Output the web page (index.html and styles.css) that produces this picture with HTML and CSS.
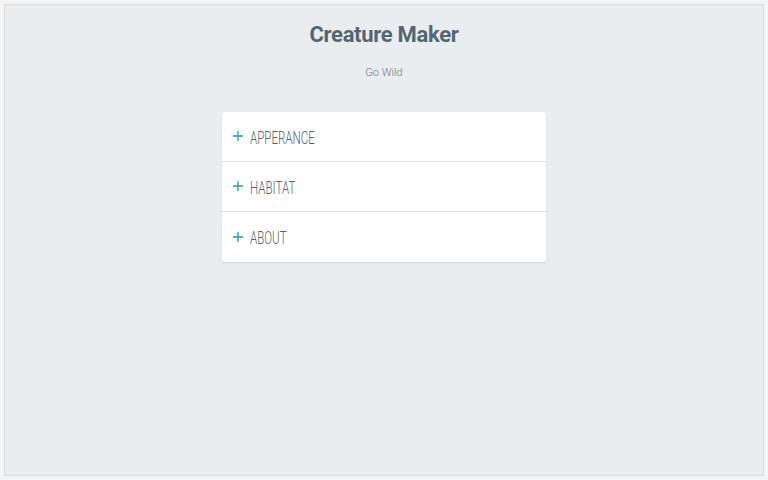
FILE: index.html
```html
<!DOCTYPE html>
<html>
<head>
<meta charset="utf-8">
<link rel="stylesheet" href="styles.css">
</head>
<body>
<div class="frame">
  <h1 class="title">Creature Maker</h1>
  <p class="subtitle">Go Wild</p>
  <div class="accordion">
    <div class="row"><svg class="plus" width="10" height="10" viewBox="0 0 10 10"><path d="M5 0V10M0 5H10" stroke="#1a9fad" stroke-width="1.3"/></svg><span class="label">APPERANCE</span></div>
    <div class="row"><svg class="plus" width="10" height="10" viewBox="0 0 10 10"><path d="M5 0V10M0 5H10" stroke="#1a9fad" stroke-width="1.3"/></svg><span class="label">HABITAT</span></div>
    <div class="row"><svg class="plus" width="10" height="10" viewBox="0 0 10 10"><path d="M5 0V10M0 5H10" stroke="#1a9fad" stroke-width="1.3"/></svg><span class="label">ABOUT</span></div>
  </div>
</div>
</body>
</html>
```
FILE: styles.css
```css
html, body { margin: 0; padding: 0; }
body {
  background: #f4f4f4;
  padding: 4px;
  height: 480px;
  box-sizing: border-box;
  font-family: Roboto, "Liberation Sans", sans-serif;
}
.frame {
  height: 472px;
  box-sizing: border-box;
  border: 1px solid #dcdcdc;
  background: #e9edf0;
  display: flex;
  flex-direction: column;
  align-items: center;
}
.title {
  margin: 17px 0 0;
  font-size: 22px;
  font-weight: 700;
  color: #546670;
  line-height: 26px;
  letter-spacing: -0.3px;
}
.subtitle {
  margin: 18px 0 0;
  font-size: 11px;
  font-weight: 300;
  color: #6f767b;
  line-height: 14px;
}
.accordion {
  margin-top: 32px;
  width: 324px;
  background: #fff;
  border-radius: 3px;
  box-shadow: 0 1px 2px rgba(0,0,0,0.12);
}
.row {
  height: 49px;
  display: flex;
  align-items: center;
  padding-left: 11px;
  border-bottom: 1px solid #dcdfe1;
}
.row:last-child { border-bottom: none; height: 50px; }
.plus {
  flex: none;
  margin-right: 7px;
  margin-top: -1px;
}
.label {
  display: inline-block;
  font-family: Roboto, "Liberation Sans", sans-serif;
  font-weight: 300;
  font-size: 17.5px;
  line-height: 20px;
  margin-top: 2px;
  color: #53636d;
  transform: scaleX(0.66);
  transform-origin: left center;
}
```
